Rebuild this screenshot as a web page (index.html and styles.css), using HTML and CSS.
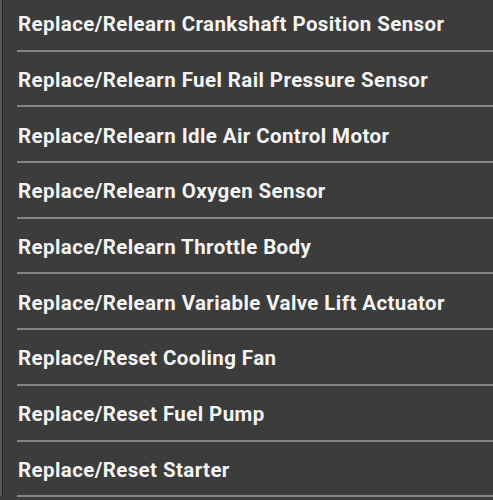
FILE: index.html
```html
<!doctype html>
<html lang="en">
<head>
    <meta charset="UTF-8">
    <title>Procedures</title>
    <link rel="stylesheet" href="styles.css">
</head>
<body>

<div class="screen">
    <ul class="menu-list">
        <li class="menu-item">Replace/Relearn Crankshaft Position Sensor</li>
        <li class="menu-item">Replace/Relearn Fuel Rail Pressure Sensor</li>
        <li class="menu-item">Replace/Relearn Idle Air Control Motor</li>
        <li class="menu-item">Replace/Relearn Oxygen Sensor</li>
        <li class="menu-item">Replace/Relearn Throttle Body</li>
        <li class="menu-item">Replace/Relearn Variable Valve Lift Actuator</li>
        <li class="menu-item">Replace/Reset Cooling Fan</li>
        <li class="menu-item">Replace/Reset Fuel Pump</li>
        <li class="menu-item">Replace/Reset Starter</li>
    </ul>
</div>

</body>
</html>
```

FILE: styles.css
```css
* {
    margin: 0;
    padding: 0;
    list-style: none;
    box-sizing: border-box;
}
html, body {
    height: 100%;
    background: #3c3c3c;
}
body {
    overflow: hidden;
    font-family: Roboto, "Liberation Sans", Arial, sans-serif;
}
.screen {
    height: 100%;
    border-left: 2px solid #565656;
}
.menu-list {
    height: 100%;
    border-left: 1px solid #242424;
    margin-top: -4px;
}
/* each row: text then a grey rule under it */
.menu-item {
    display: flex;
    align-items: center;
    height: 55.7px;
    margin-left: 14px;
    padding: 3px 0 0 1px;
    border-bottom: 2px solid #858585;
    color: #f4f4f4;
    font-size: 20.5px;
    font-weight: bold;
    letter-spacing: 0.4px;
}
```
